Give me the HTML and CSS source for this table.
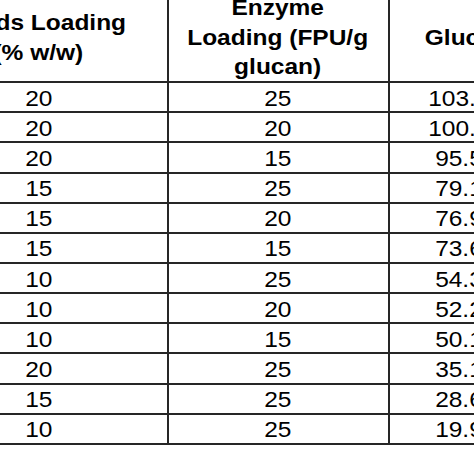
FILE: index.html
```html
<!DOCTYPE html>
<html lang="en">
<head>
<meta charset="utf-8">
<title>Glucose yield table</title>
<link rel="stylesheet" href="styles.css">
</head>
<body>
<div class="table">
  <div class="cell head c1"><span class="txt">Solids Loading<br>(% w/w)</span></div>
  <div class="cell head c2"><span class="txt">Enzyme<br>Loading (FPU/g<br>glucan)</span></div>
  <div class="cell head c3"><span class="txt">Glucose (g/L)</span></div>

  <div class="cell c1"><span class="txt">20</span></div><div class="cell c2"><span class="txt">25</span></div><div class="cell c3"><span class="txt">103.21 ± 1.45</span></div>
  <div class="cell c1"><span class="txt">20</span></div><div class="cell c2"><span class="txt">20</span></div><div class="cell c3"><span class="txt">100.47 ± 2.03</span></div>
  <div class="cell c1"><span class="txt">20</span></div><div class="cell c2"><span class="txt">15</span></div><div class="cell c3"><span class="txt">95.52 ± 1.18</span></div>
  <div class="cell c1"><span class="txt">15</span></div><div class="cell c2"><span class="txt">25</span></div><div class="cell c3"><span class="txt">79.14 ± 0.96</span></div>
  <div class="cell c1"><span class="txt">15</span></div><div class="cell c2"><span class="txt">20</span></div><div class="cell c3"><span class="txt">76.93 ± 1.22</span></div>
  <div class="cell c1"><span class="txt">15</span></div><div class="cell c2"><span class="txt">15</span></div><div class="cell c3"><span class="txt">73.65 ± 0.87</span></div>
  <div class="cell c1"><span class="txt">10</span></div><div class="cell c2"><span class="txt">25</span></div><div class="cell c3"><span class="txt">54.31 ± 0.74</span></div>
  <div class="cell c1"><span class="txt">10</span></div><div class="cell c2"><span class="txt">20</span></div><div class="cell c3"><span class="txt">52.26 ± 0.58</span></div>
  <div class="cell c1"><span class="txt">10</span></div><div class="cell c2"><span class="txt">15</span></div><div class="cell c3"><span class="txt">50.12 ± 0.63</span></div>
  <div class="cell c1"><span class="txt">20</span></div><div class="cell c2"><span class="txt">25</span></div><div class="cell c3"><span class="txt">35.17 ± 0.49</span></div>
  <div class="cell c1"><span class="txt">15</span></div><div class="cell c2"><span class="txt">25</span></div><div class="cell c3"><span class="txt">28.64 ± 0.41</span></div>
  <div class="cell c1"><span class="txt">10</span></div><div class="cell c2"><span class="txt">25</span></div><div class="cell c3"><span class="txt">19.95 ± 0.33</span></div>
</div>
</body>
</html>
```
FILE: styles.css
```css
html, body {
  margin: 0;
  padding: 0;
  background: #ffffff;
}
body {
  width: 474px;
  height: 474px;
  overflow: hidden;
  font-family: "Liberation Sans", Arial, Helvetica, sans-serif;
  color: #000000;
}
.table {
  display: grid;
  grid-template-columns: 257.9px 221px 227.5px;
  grid-template-rows: 83.2px repeat(12, 30.15px);
  margin-left: -89.4px;
  width: 706.4px;
}
.cell {
  box-sizing: border-box;
  display: flex;
  justify-content: center;
  align-items: center;
  border-bottom: 2px solid #262626;
  padding-top: 3px;
  font-size: 21.3px;
  line-height: 24px;
  white-space: nowrap;
  overflow: visible;
}
.c1, .c2 {
  border-right: 2px solid #262626;
}
.head {
  padding-top: 0;
  padding-bottom: 3.8px;
  font-weight: bold;
  line-height: 29.5px;
  text-align: center;
}
.txt {
  display: inline-block;
  transform: scaleX(1.15);
  transform-origin: center;
  text-align: center;
}
```
